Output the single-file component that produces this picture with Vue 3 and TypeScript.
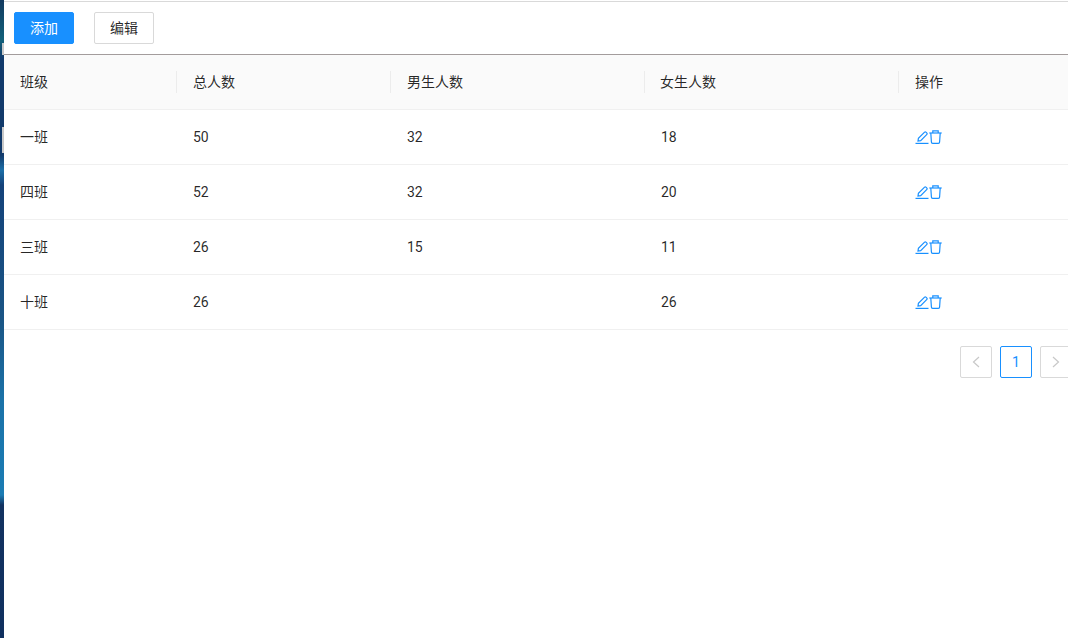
<script setup lang="ts">
interface Row { name: string; total: string; boys: string; girls: string }
const columns = ['班级', '总人数', '男生人数', '女生人数', '操作']
const rows: Row[] = [
  { name: '一班', total: '50', boys: '32', girls: '18' },
  { name: '四班', total: '52', boys: '32', girls: '20' },
  { name: '三班', total: '26', boys: '15', girls: '11' },
  { name: '十班', total: '26', boys: '', girls: '26' },
]
</script>

<template>
  <div class="page">
    <div class="wallpaper">
      <span class="tab tab-top"></span>
      <span class="tab tab-mid"></span>
    </div>
    <main class="panel">
      <div class="toolbar">
        <button class="btn primary">添加</button>
        <button class="btn">编辑</button>
      </div>
      <div class="grid head">
        <div v-for="c in columns" :key="c" class="th">{{ c }}</div>
      </div>
      <div v-for="r in rows" :key="r.name" class="grid row">
        <div class="td">{{ r.name }}</div>
        <div class="td">{{ r.total }}</div>
        <div class="td">{{ r.boys }}</div>
        <div class="td">{{ r.girls }}</div>
        <div class="td ops">
          <svg width="14" height="14" viewBox="0 0 14 14" fill="none" stroke="#1890ff" stroke-width="1.2">
            <path d="M0.5 13.4H13.5" />
            <path d="M3 11L3.4 8.3 9.6 2.1a.9.9 0 0 1 1.3 0l1 1a.9.9 0 0 1 0 1.3L5.7 10.6 3 11Z" />
          </svg>
          <svg width="13" height="14" viewBox="0 0 13 14" fill="none" stroke="#1890ff" stroke-width="1.2">
            <path d="M0.3 3H12.7" />
            <path d="M3.8 3V0.8h5.4V3" />
            <path d="M1.8 3L2.4 12a1.3 1.3 0 0 0 1.3 1.3h5.6A1.3 1.3 0 0 0 10.6 12L11.2 3" />
          </svg>
        </div>
      </div>
      <nav class="pager">
        <span class="page-item muted">
          <svg width="10" height="12" viewBox="0 0 10 12" fill="none" stroke="#c8c8c8" stroke-width="1.2"><path d="M8 1L2.5 6 8 11" /></svg>
        </span>
        <span class="page-item active">1</span>
        <span class="page-item muted">
          <svg width="10" height="12" viewBox="0 0 10 12" fill="none" stroke="#c8c8c8" stroke-width="1.2"><path d="M2 1L7.5 6 2 11" /></svg>
        </span>
      </nav>
    </main>
  </div>
</template>

<style>
html, body { margin: 0; overflow: hidden; background: #fff; }
</style>

<style scoped>
.page {
  display: flex;
  width: 1068px;
  height: 638px;
  overflow: hidden;
  font-family: Roboto, "Noto Sans CJK SC", "Noto Sans", sans-serif;
  font-size: 14px;
  color: rgba(0, 0, 0, 0.85);
}
.wallpaper {
  position: relative;
  flex: 0 0 4px;
  background: linear-gradient(180deg, #123a60 0, #12617a 40px, #123a6b 58px, #123a6b 155px, #1c6fa8 170px, #14427a 185px, #1a5585 320px, #1a72a8 400px, #1b7cb4 495px, #123260 505px, #10305f 638px);
}
.tab {
  position: absolute;
  left: 2px;
  width: 2px;
  background: #c9c9c9;
}
.tab-top { top: 43px; height: 12px; }
.tab-mid { top: 127px; height: 26px; }
.panel {
  flex: 0 0 1064px;
  min-width: 0;
  padding-top: 1px;
  box-sizing: border-box;
  background: #fff;
}
.toolbar {
  display: flex;
  gap: 20px;
  height: 54px;
  box-sizing: border-box;
  padding: 10px 10px 0;
  border-top: 1px solid #d9d9d9;
  border-bottom: 1px solid #a39c9c;
}
.btn {
  width: 60px;
  height: 32px;
  padding: 0 0 2px;
  border: 1px solid #d9d9d9;
  border-radius: 2px;
  background: #fff;
  color: rgba(0, 0, 0, 0.85);
  font: inherit;
}
.primary {
  border-color: #1890ff;
  background: #1890ff;
  color: #fff;
}
.grid {
  display: grid;
  grid-template-columns: 172px 214px 254px 254px 170px;
  align-items: center;
  border-bottom: 1px solid #f0f0f0;
  box-sizing: border-box;
  height: 55px;
}
.head {
  background: #fafafa;
}
.th, .td {
  padding-left: 16px;
  line-height: 22px;
}
.th { position: relative; }
.th + .th::before {
  content: "";
  position: absolute;
  left: 0;
  top: 50%;
  width: 1px;
  height: 22px;
  transform: translateY(-50%);
  background: #ececec;
}
.th:nth-child(n+2), .td:nth-child(n+2) { padding-left: 17px; }
.th:nth-child(4) { padding-left: 16px; }
.ops {
  display: flex;
  align-items: center;
  height: 22px;
  margin-top: -1px;
}
.pager {
  display: flex;
  gap: 8px;
  padding: 16px 0 0 956px;
}
.page-item {
  flex: 0 0 32px;
  width: 32px;
  height: 32px;
  box-sizing: border-box;
  display: flex;
  align-items: center;
  justify-content: center;
  border: 1px solid #d9d9d9;
  border-radius: 2px;
  background: #fff;
}
.active {
  border-color: #1890ff;
  color: #1890ff;
}
</style>
